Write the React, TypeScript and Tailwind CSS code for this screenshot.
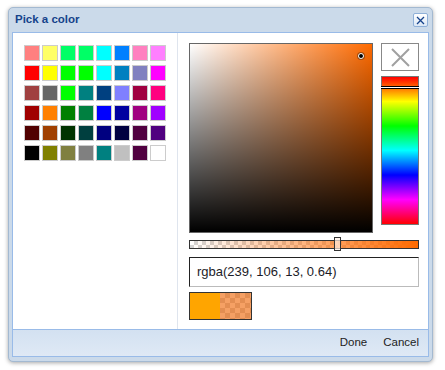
import React from "react";

const swatches: string[][] = [
  ["#ff8080", "#ffff66", "#00ff66", "#00ff66", "#00ffff", "#0080ff", "#ff80c0", "#ff80ff"],
  ["#ff0000", "#ffff00", "#00ff00", "#00ff00", "#00ffff", "#0080c0", "#8080c0", "#ff00ff"],
  ["#a04040", "#666666", "#00ff00", "#008080", "#004080", "#8080ff", "#a00040", "#ff0080"],
  ["#a00000", "#ff8000", "#008000", "#008040", "#0000ff", "#0000a0", "#a00080", "#a000ff"],
  ["#500000", "#a04000", "#003300", "#003f3f", "#000080", "#000040", "#500040", "#500080"],
  ["#000000", "#808000", "#808040", "#808080", "#008080", "#c0c0c0", "#500040", "#ffffff"],
];

export default function App() {
  return (
    <div
      className="w-[445px] h-[370px] bg-white pt-[7px] pl-[8px]"
      style={{ fontFamily: '"Liberation Sans", Arial, sans-serif' }}
    >
      <div className="w-[425px] h-[355px] flex flex-col rounded-[5px] border border-[#a3b9d1] bg-[#cbdaea] px-[3px] pb-[4px] shadow-[0_1px_4px_rgba(0,0,0,0.35)]">
        {/* header */}
        <div className="h-[24px] flex items-center justify-between pl-[3px] pr-[1px]">
          <span className="text-[11.5px] font-bold text-[#15428b]">Pick a color</span>
          <div className="w-[15px] h-[14px] rounded-[2px] border border-[#8fb0d8] bg-[linear-gradient(to_bottom,#ffffff,#dbe7f5)] flex items-center justify-center">
            <svg width="9" height="9" viewBox="0 0 9 9">
              <path d="M1 1 L8 8 M8 1 L1 8" stroke="#15428b" strokeWidth="1.3" />
            </svg>
          </div>
        </div>
        {/* box */}
        <div className="flex-1 flex flex-col border border-[#99bbe8]">
          <div className="h-[296px] flex bg-white">
            {/* left swatches */}
            <div className="w-[165px] border-r border-[#dfe5ee] pt-[12px] pl-[11px]">
              <div className="flex flex-col gap-[4px]">
                {swatches.map((row, i) => (
                  <div key={i} className="flex gap-[2px]">
                    {row.map((c, j) => (
                      <div
                        key={j}
                        className="w-[16px] h-[16px] border border-[#cccccc]"
                        style={{ backgroundColor: c }}
                      />
                    ))}
                  </div>
                ))}
              </div>
            </div>
            {/* right picker */}
            <div className="flex-1 pt-[10px] pl-[11px] pr-[9px] flex flex-col">
              <div className="flex gap-[8px]">
                <div className="relative w-[184px] h-[190px] border border-[#666666] bg-[#ff6a00]">
                  <div className="absolute inset-0 bg-[linear-gradient(to_right,#ffffff,rgba(255,255,255,0))]" />
                  <div className="absolute inset-0 bg-[linear-gradient(to_bottom,rgba(0,0,0,0),#000000)]" />
                  <div className="absolute left-[168px] top-[9px] w-[6px] h-[6px] rounded-full bg-black border border-white shadow-[0_0_0_1px_rgba(0,0,0,0.3)]" />
                </div>
                <div className="w-[38px] flex flex-col gap-[5px]">
                  <div className="h-[28px] border border-[#888888] bg-white flex items-center justify-center">
                    <svg width="19" height="19" viewBox="0 0 19 19">
                      <path d="M1 1 L18 18 M18 1 L1 18" stroke="#a0a0a0" strokeWidth="2" />
                    </svg>
                  </div>
                  <div className="relative h-[149px] border border-[#777777] bg-[linear-gradient(to_bottom,#ff0000_0%,#ffff00_16.67%,#00ff00_33.33%,#00ffff_50%,#0000ff_66.67%,#ff00ff_83.33%,#ff0000_100%)]">
                    <div className="absolute left-[-1px] right-[-1px] top-[9px] h-[3px] bg-white border-y border-black" />
                  </div>
                </div>
              </div>
              {/* alpha slider */}
              <div className="relative mt-[7px] h-[9px] border border-[#333333] bg-[conic-gradient(#d4d4d4_25%,#ffffff_0_50%,#d4d4d4_0_75%,#ffffff_0)] bg-[length:8px_8px]">
                <div className="absolute inset-0 bg-[linear-gradient(to_right,rgba(255,106,0,0),#ff6a00)]" />
                <div className="absolute left-[144px] top-[-4px] w-[7px] h-[14px] border border-[#333333] bg-[rgba(255,240,230,0.7)]" />
              </div>
              {/* input */}
              <div className="mt-[8px] h-[30px] border border-[#222222] border-r-[#bbbbbb] border-b-[#bbbbbb] flex items-center pl-[7px] text-[13px] text-[#1c1c28]">
                rgba(239, 106, 13, 0.64)
              </div>
              {/* preview */}
              <div className="mt-[5px] w-[63px] h-[28px] border border-[#333333] flex">
                <div className="w-[30px] h-full bg-[#ffa500]" />
                <div className="relative flex-1 h-full bg-[conic-gradient(#cccccc_25%,#ffffff_0_50%,#cccccc_0_75%,#ffffff_0)] bg-[length:10px_10px]">
                  <div className="absolute inset-0 bg-[rgba(239,106,13,0.64)]" />
                </div>
              </div>
            </div>
          </div>
          {/* footer */}
          <div className="flex-1 border-t border-[#99bbe8] bg-[linear-gradient(to_bottom,#d3e1f1,#dfe9f5)] flex items-center justify-end gap-[16px] pr-[9px] text-[11.5px] text-[#222222]">
            <span>Done</span>
            <span>Cancel</span>
          </div>
        </div>
      </div>
    </div>
  );
}
